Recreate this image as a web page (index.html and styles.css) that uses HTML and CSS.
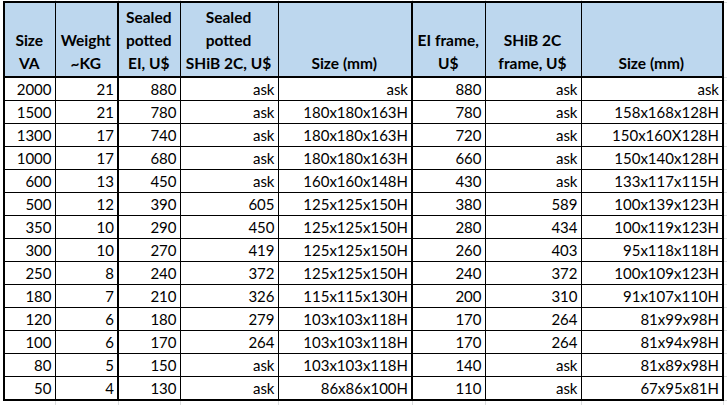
FILE: index.html
```html
<!DOCTYPE html>
<html lang="en">
<head>
<meta charset="utf-8">
<title>Transformer price list</title>
<link rel="stylesheet" href="styles.css">
</head>
<body>
<div class="sheet">
<table class="grid">
  <colgroup>
    <col class="c1"><col class="c2"><col class="c3"><col class="c4"><col class="c5"><col class="c6"><col class="c7"><col class="c8"><col class="cx">
  </colgroup>
  <tbody>
    <tr class="pad-top"><td></td><td></td><td></td><td></td><td></td><td></td><td></td><td></td><td></td></tr>
    <tr class="head">
      <th class="tl">Size<br>VA</th>
      <th class="thick-r">Weight<br>~KG</th>
      <th>Sealed<br>potted<br>EI, U$</th>
      <th>Sealed<br>potted<br>SHiB 2C, U$</th>
      <th class="thick-r">Size (mm)</th>
      <th>EI frame,<br>U$</th>
      <th>SHiB 2C<br>frame, U$</th>
      <th class="tr">Size (mm)</th>
      <td class="side"></td>
    </tr>
    <tr class="r23"><td class="tl">2000</td><td class="thick-r">21</td><td>880</td><td>ask</td><td class="thick-r">ask</td><td>880</td><td>ask</td><td class="tr">ask</td><td class="side"></td></tr>
    <tr class="r23"><td class="tl">1500</td><td class="thick-r">21</td><td>780</td><td>ask</td><td class="thick-r">180x180x163H</td><td>780</td><td>ask</td><td class="tr">158x168x128H</td><td class="side"></td></tr>
    <tr class="r22"><td class="tl">1300</td><td class="thick-r">17</td><td>740</td><td>ask</td><td class="thick-r">180x180x163H</td><td>720</td><td>ask</td><td class="tr">150x160X128H</td><td class="side"></td></tr>
    <tr class="r23"><td class="tl">1000</td><td class="thick-r">17</td><td>680</td><td>ask</td><td class="thick-r">180x180x163H</td><td>660</td><td>ask</td><td class="tr">150x140x128H</td><td class="side"></td></tr>
    <tr class="r23"><td class="tl">600</td><td class="thick-r">13</td><td>450</td><td>ask</td><td class="thick-r">160x160x148H</td><td>430</td><td>ask</td><td class="tr">133x117x115H</td><td class="side"></td></tr>
    <tr class="r22"><td class="tl">500</td><td class="thick-r">12</td><td>390</td><td>605</td><td class="thick-r">125x125x150H</td><td>380</td><td>589</td><td class="tr">100x139x123H</td><td class="side"></td></tr>
    <tr class="r23"><td class="tl">350</td><td class="thick-r">10</td><td>290</td><td>450</td><td class="thick-r">125x125x150H</td><td>280</td><td>434</td><td class="tr">100x119x123H</td><td class="side"></td></tr>
    <tr class="r23"><td class="tl">300</td><td class="thick-r">10</td><td>270</td><td>419</td><td class="thick-r">125x125x150H</td><td>260</td><td>403</td><td class="tr">95x118x118H</td><td class="side"></td></tr>
    <tr class="r22"><td class="tl">250</td><td class="thick-r">8</td><td>240</td><td>372</td><td class="thick-r">125x125x150H</td><td>240</td><td>372</td><td class="tr">100x109x123H</td><td class="side"></td></tr>
    <tr class="r23"><td class="tl">180</td><td class="thick-r">7</td><td>210</td><td>326</td><td class="thick-r">115x115x130H</td><td>200</td><td>310</td><td class="tr">91x107x110H</td><td class="side"></td></tr>
    <tr class="r23"><td class="tl">120</td><td class="thick-r">6</td><td>180</td><td>279</td><td class="thick-r">103x103x118H</td><td>170</td><td>264</td><td class="tr">81x99x98H</td><td class="side"></td></tr>
    <tr class="r22"><td class="tl">100</td><td class="thick-r">6</td><td>170</td><td>264</td><td class="thick-r">103x103x118H</td><td>170</td><td>264</td><td class="tr">81x94x98H</td><td class="side"></td></tr>
    <tr class="r23"><td class="tl">80</td><td class="thick-r">5</td><td>150</td><td>ask</td><td class="thick-r">103x103x118H</td><td>140</td><td>ask</td><td class="tr">81x89x98H</td><td class="side"></td></tr>
    <tr class="r23 last"><td class="tl">50</td><td class="thick-r">4</td><td>130</td><td>ask</td><td class="thick-r">86x86x100H</td><td>110</td><td>ask</td><td class="tr">67x95x81H</td><td class="side"></td></tr>
    <tr class="pad-bottom"><td></td><td></td><td></td><td></td><td></td><td></td><td></td><td></td><td></td></tr>
  </tbody>
</table>
</div>
</body>
</html>
```

FILE: styles.css
```css
html, body {
  margin: 0;
  padding: 0;
  background: #ffffff;
}

.sheet {
  padding-left: 3px;
  font-family: Lato, "Liberation Sans", sans-serif;
  font-size: 15px;
  color: #000000;
}

.grid {
  border-collapse: collapse;
  table-layout: fixed;
  width: 724px;
}

.c1 { width: 51px; }
.c2 { width: 63px; }
.c3 { width: 62px; }
.c4 { width: 98px; }
.c5 { width: 134px; }
.c6 { width: 73px; }
.c7 { width: 96px; }
.c8 { width: 142px; }
.cx { width: 5px; }

.grid td,
.grid th {
  border: 1px solid #000000;
  padding: 0 3px 0 2px;
  white-space: nowrap;
  overflow: hidden;
  line-height: 22px;
}

.grid td {
  text-align: right;
  vertical-align: bottom;
}

.head th {
  background: #bdd7ee;
  font-weight: 700;
  font-size: 15.5px;
  text-align: center;
  vertical-align: bottom;
  height: 72px;
  border-top: 2px solid #000000;
  border-bottom: 2px solid #000000;
  padding-bottom: 1px;
  line-height: 23px;
}

.r23 td { height: 22px; }
.r22 td { height: 21px; }

.grid .tl { border-left: 2px solid #000000; }
.grid .tr { border-right: 2px solid #000000; }
.grid .thick-r { border-right: 2px solid #000000; }
.last td { border-bottom: 2px solid #000000; }

.pad-top td {
  height: 1px;
  padding: 0;
  border: 1px solid #dadcdd;
  border-top: none;
  line-height: 0;
}

.pad-bottom td {
  height: 8px;
  padding: 0;
  border: 1px solid #dadcdd;
  border-bottom: none;
  line-height: 0;
}

.grid td.side {
  padding: 0;
  border-right: none;
  border-top: 1px solid #dadcdd;
  border-bottom: 1px solid #dadcdd;
}

.pad-top td:first-child,
.pad-bottom td:first-child {
  border-left: none;
}
.pad-top td:last-child,
.pad-bottom td:last-child {
  border-right: none;
}
```
